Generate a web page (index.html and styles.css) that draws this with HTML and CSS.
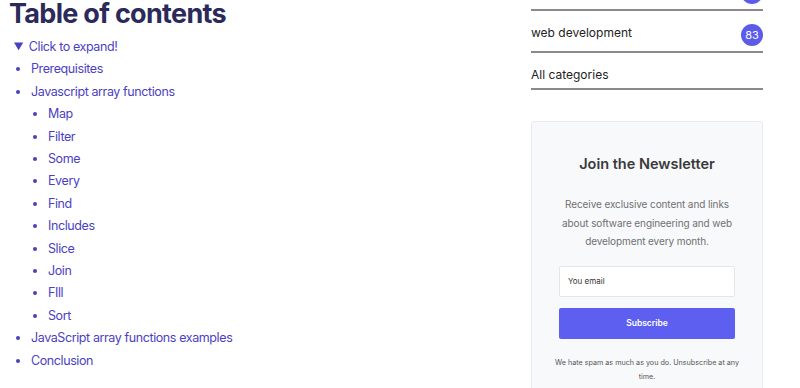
FILE: index.html
```html
<!DOCTYPE html>
<html lang="en">
  <head>
    <meta charset="UTF-8" />
    <title>Javascript array functions</title>
    <link rel="stylesheet" href="styles.css">
  </head>
  <body>
    <div class="page">
      <main class="content">
        <h1 class="toc-title">Table of contents</h1>
        <details class="toc" open>
          <summary>Click to expand!</summary>
          <ul class="toc-list">
            <li><a href="#prerequisites">Prerequisites</a></li>
            <li>
              <a href="#functions">Javascript array functions</a>
              <ul class="toc-sub">
                <li><a href="#map">Map</a></li>
                <li><a href="#filter">Filter</a></li>
                <li><a href="#some">Some</a></li>
                <li><a href="#every">Every</a></li>
                <li><a href="#find">Find</a></li>
                <li><a href="#includes">Includes</a></li>
                <li><a href="#slice">Slice</a></li>
                <li><a href="#join">Join</a></li>
                <li><a href="#fill">FIll</a></li>
                <li><a href="#sort">Sort</a></li>
              </ul>
            </li>
            <li><a href="#examples">JavaScript array functions examples</a></li>
            <li><a href="#conclusion">Conclusion</a></li>
          </ul>
        </details>
      </main>

      <aside class="sidebar">
        <ul class="categories">
          <li class="category">
            <span class="category-name">javascript</span>
            <span class="badge">41</span>
          </li>
          <li class="category">
            <span class="category-name">web development</span>
            <span class="badge">83</span>
          </li>
          <li class="category">
            <span class="category-name">All categories</span>
          </li>
        </ul>

        <div class="newsletter">
          <h3 class="newsletter-title">Join the Newsletter</h3>
          <p class="newsletter-text">
            Receive exclusive content and links about software engineering and web development every month.
          </p>
          <form class="newsletter-form">
            <input type="email" placeholder="You email" />
            <button type="submit">Subscribe</button>
          </form>
          <p class="newsletter-note">We hate spam as much as you do. Unsubscribe at any time.</p>
        </div>
      </aside>
    </div>
  </body>
</html>
```

FILE: styles.css
```css
body {
  margin: 0;
  font-family: Inter, "Noto Sans", sans-serif;
  background: #fff;
  overflow: hidden;
}

.page {
  display: grid;
  grid-template-columns: 1fr 232px;
  column-gap: 31px;
  padding: 0 37px 0 9px;
  margin-top: -3px;
}

.toc-title {
  margin: 0;
  font-size: 27px;
  line-height: 34px;
  font-weight: 700;
  color: #2c2a5a;
  letter-spacing: -0.7px;
}

.toc {
  margin-top: 4px;
  color: #4b3fc2;
  font-size: 12.5px;
  line-height: 22.4px;
  letter-spacing: -0.4px;
}

.toc summary {
  padding-left: 5px;
  cursor: pointer;
}

.toc summary::marker {
  font-size: 14px;
}

.toc a {
  color: #4b3fc2;
  text-decoration: none;
}

.toc-list {
  margin: 0;
  padding-left: 22px;
}

.toc-sub {
  margin: 0;
  padding-left: 17px;
  list-style: disc;
}

.sidebar {
  margin-top: -28px;
}

.categories {
  list-style: none;
  margin: 0;
  padding: 0;
}

.category {
  display: flex;
  justify-content: space-between;
  align-items: flex-start;
  padding: 13px 0 5px;
  border-bottom: 2px solid #8a8a8a;
  font-size: 12px;
  line-height: 16px;
  color: #222;
}

.category-name {
  margin-top: 1px;
}

.badge {
  width: 22px;
  height: 22px;
  border-radius: 50%;
  background: #5b5ce8;
  color: #fff;
  font-size: 11px;
  line-height: 22px;
  text-align: center;
}

.newsletter {
  margin-top: 31px;
  background: #f8f9fb;
  border: 1px solid #e8e9ee;
  border-radius: 3px;
  padding: 32px 27px 20px;
  text-align: center;
}

.newsletter-title {
  margin: 0;
  font-size: 14.5px;
  line-height: 20px;
  font-weight: 600;
  color: #3a3a3a;
}

.newsletter-text {
  margin: 21px 0 0;
  font-size: 10px;
  line-height: 18.5px;
  letter-spacing: -0.1px;
  color: #707070;
}

.newsletter-form {
  display: flex;
  flex-direction: column;
  gap: 11px;
  margin-top: 15px;
}

.newsletter-form input {
  height: 31px;
  box-sizing: border-box;
  padding: 0 8px;
  border: 1px solid #e6e6e6;
  border-radius: 2px;
  background: #fff;
  font-family: inherit;
  font-size: 8px;
}

.newsletter-form input::placeholder {
  color: #333;
}

.newsletter-form button {
  height: 31px;
  border: 0;
  border-radius: 2px;
  background: #5d5ff0;
  color: #fff;
  font-family: inherit;
  font-size: 8.5px;
  font-weight: 600;
}

.newsletter-note {
  margin: 17px -4px 0;
  font-size: 7.2px;
  line-height: 14px;
  color: #555;
}
```
